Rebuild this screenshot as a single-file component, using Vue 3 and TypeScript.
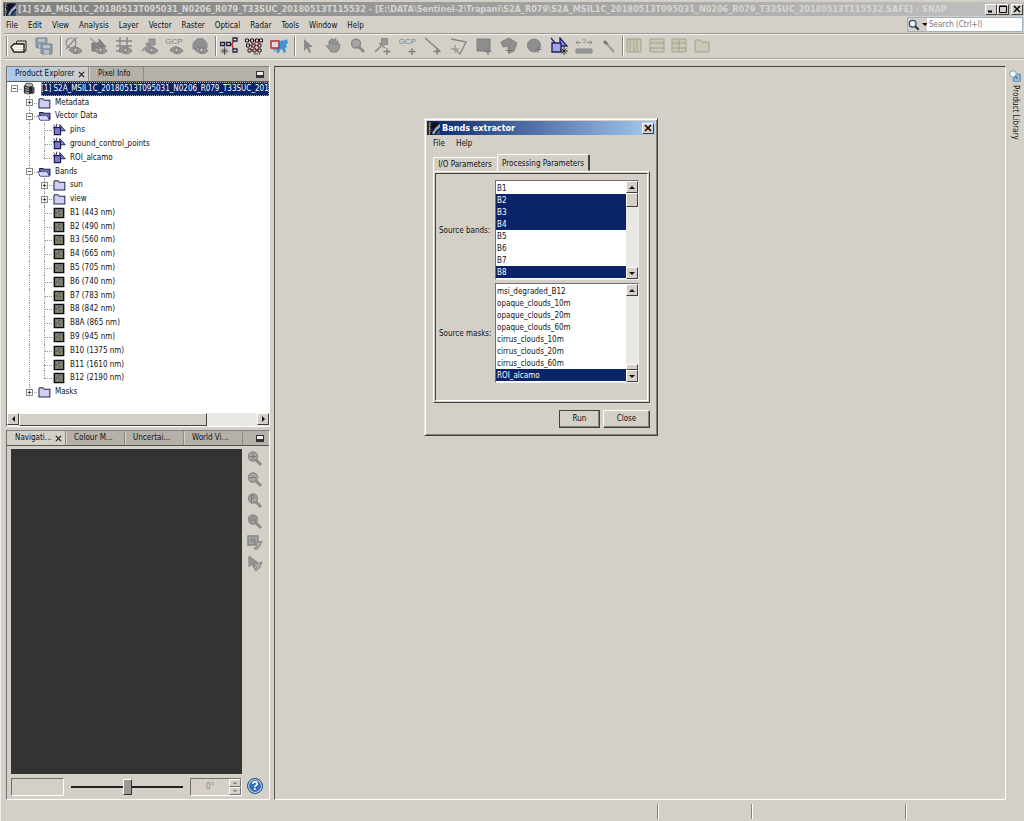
<script setup lang="ts">
import { ref } from 'vue'

interface TreeRow { level: number; label: string; icon: string; toggle?: string; last?: boolean }
interface Tool { name: string; icon: string; live?: boolean }

const path = 'S2A_MSIL1C_20180513T095031_N0206_R079_T33SUC_20180513T115532'
const title = `[1] ${path} - [E:\\DATA\\Sentinel-2\\Trapani\\S2A_R079\\${path}.SAFE] - SNAP`
const menus = ['File', 'Edit', 'View', 'Analysis', 'Layer', 'Vector', 'Raster', 'Optical', 'Radar', 'Tools', 'Window', 'Help']

const eye = '<path d="M4 13q5-6 11-1q2 1 2 2q-6 6-13-1z" fill="#999" stroke="#7f7f7f"/><circle cx="10.500" cy="13" r="2" fill="#c4c1ba" stroke="#777"/>'
const plus = '<path d="M13 11v7M9.500 14.500h7" stroke="#7d7d7d" stroke-width="1.300"/>'
const lens = '<path d="M10 10l5 5" stroke="#8b8b8b" stroke-width="3"/><circle cx="7" cy="6.500" r="4.500" fill="#a5a5a5" stroke="#888" stroke-width="1.300"/>'

const icons: Record<string, string> = {
  open: '<path d="M7 4h9v10h-3V7H6z" fill="#e9d9d2" stroke="#222"/><path d="M1 10l3-3h10v8H4z" fill="#fffef4" stroke="#222" stroke-width="1.400"/><path d="M4 10h9M4 12.500h9" stroke="#d8d2c4"/>',
  saveAll: '<path d="M1 1h11v10H2l-1-1z" fill="#8b9aa7" stroke="#7d8b98"/><path d="M3 2h7v3H3zM4 7h5v4H4z" fill="#b9c2c6"/><path d="M6 7h11v10H7l-1-1z" fill="#8b9aa7" stroke="#7b8995"/><path d="M8 8h7v3H8zM9 13h5v4H9z" fill="#b9c2c6"/>',
  noData: '<circle cx="6" cy="6" r="5" fill="none" stroke="#888" stroke-width="1.200"/><path d="M1 12L12 0" stroke="#888" stroke-width="1.200"/>' + eye,
  shapeEye: '<path d="M0 1l5 4M2 6h7V2l7 8H9v4H2z" fill="#858585" stroke="#777"/>' + eye,
  gridEye: '<path d="M1 4h16M1 9h16M5 0v16M12 0v12M1 14h5" stroke="#858585" stroke-width="1.400" fill="none"/>' + eye,
  pinEye: '<path d="M1 14l6-6" stroke="#888" stroke-width="1.600"/><path d="M8 2h6v6H8z" fill="#999" stroke="#888"/><path d="M5 6l6 5" stroke="#888" stroke-width="2"/>' + eye,
  gcpEye: eye,
  maskEye: '<path d="M2 12V7q3-7 10-5q5 3 4 9z" fill="#909090" stroke="#858585"/>' + eye,
  graph: '<g fill="#dfe0ee" stroke="#22223c" stroke-width="1.300"><path d="M10 7.500h2L14 3M12 7.500l2 6" fill="none" stroke="#c52222"/><path d="M0.500 5.500h4v3h-4zM6.500 5.500h4v3h-4zM13 1h4v3h-4zM13 12h4v3h-4z"/></g><path d="M4.500 10v8M.500 14h8M2 11.500l5 5M7 11.500l-5 5" stroke="#444" stroke-width=".9"/>',
  batch: '<path d="M2 3.500h14M2 8.500h14M3 13h10M5 3.500l3 5l4-5l3 5l-3 5l-4-5l-4 5" fill="none" stroke="#bd2828"/><g fill="#ddd" stroke="#22111c"><path d="M0.500 2h3v3h-3zM5.500 2h3v3h-3zM10.500 2h3v3h-3zM14.500 2h3v3h-3zM1.500 7h3v3h-3zM7 7h3v3H7zM13 7h3v3h-3zM3 12h3v3H3zM8 12h3v3H8zM13 12h3v3h-3z"/><path d="M9 17h6" stroke-dasharray="1.500 1"/></g>',
  map: '<path d="M9 5l3-2l1 1l4-2l1 4l-2 1l1 3l-2 1l1 4l-2 1l-2-4l-2 1l-1 3l-2 0l-1-5z" fill="#3f93d6"/><path d="M2 11h5l-1 3l-2 1z" fill="#6fa9d4"/><path d="M1 4h8v7H1z" fill="#d9d8da" stroke="#b13131" stroke-width="1.400"/>',
  arrow: '<path d="M5 2v12l3-3l2 5l2-1l-2-5h4z" fill="#8b8b8b"/>',
  hand: '<path d="M2 8l3 2V4h1v4l1-6h2v6l1-6h2v6l1-4h1v5l1-2h1q0 5-3 8H7z" fill="#9a9a9a" stroke="#858585"/>',
  zoom: lens,
  pinAdd: '<path d="M1 15l7-7M5 6l6 5" stroke="#8a8a8a" stroke-width="1.600"/><path d="M7.500 1.500h6v6h-6z" fill="#999" stroke="#888"/>' + plus,
  gcpAdd: plus,
  lineAdd: '<path d="M1 1l15 13" stroke="#888" stroke-width="1.600"/>' + plus,
  polylineAdd: '<path d="M1 2l15 3l-6 12l-4-4" fill="none" stroke="#888" stroke-width="1.400"/><path d="M5 8v8M1 12h8" stroke="#888"/>',
  rectAdd: '<path d="M2 2h13v12H2z" fill="#8d8d8d" stroke="#7e7e7e"/>' + plus,
  polyAdd: '<path d="M1 5l8-4l8 5l-3 8l-5 2l-1-5l1-2l-6 1z" fill="#8f8f8f" stroke="#808080"/><path d="M9 10v7M5.500 13.500h7" stroke="#777"/>',
  circleAdd: '<circle cx="9" cy="8.500" r="6.500" fill="#8f8f8f" stroke="#808080"/><path d="M13 9v7M9.500 12.500h7" stroke="#777"/>',
  newVector: '<path d="M1 1l4 5M10 1l7 8h-7z" stroke="#1b2270" stroke-width="1.300" fill="#9a9adf"/><path d="M2 6h9v9H2z" fill="#a3a3e4" stroke="#1b2270" stroke-width="1.400"/><path d="M14 10v8M10 14h8M11.500 11.500l5 5M16.500 11.500l-5 5" stroke="#222" stroke-width=".9"/>',
  measure: '<path d="M1 5.500h5M12 5.500h5M3 3.500l-2 2l2 2M15 3.500l2 2l-2 2" stroke="#888" fill="none"/><path d="M1 12h16v4H1z" fill="#999" stroke="#888"/>',
  wand: '<path d="M6 6l8 9" stroke="#999" stroke-width="2"/><path d="M4 4l3 3" stroke="#777" stroke-width="3"/>',
  tileV: '<path d="M2 2h14v13H2zM5 2v13M9 2v13M12 2v13" fill="#c9c8b4" stroke="#a2a192"/>',
  tileH: '<path d="M2 2h14v13H2zM2 6h14M2 11h14" fill="#c9c8b4" stroke="#a2a192"/>',
  tileGrid: '<path d="M2 2h14v13H2zM9 2v13M2 6h14M2 11h14" fill="#c9c8b4" stroke="#a2a192"/>',
  tab: '<path d="M2 3h6l1 2h7v10H2z" fill="#c9c8b4" stroke="#a2a192"/>',
  product: '<path d="M3 5v9q5 3 10 0V5q-5-3-10 0z" fill="#333" stroke="#111"/><path d="M4 6v8q3 2 5 1V7z" fill="#999"/><path d="M3 8q5 3 10 0M3 11q5 3 10 0" stroke="#111" fill="none"/><ellipse cx="9" cy="4" rx="5" ry="2.500" fill="#bbb" stroke="#222"/><path d="M13 5l3 2v7l-3 2z" fill="#444"/>',
  folder: '<path d="M2.500 15.500v-11l1-1h4l2 2h7v10z" fill="#ccd" stroke="#222759" stroke-width="1.300"/><path d="M4 7h11v7H4z" fill="#cfcff7"/>',
  folderOpen: '<path d="M3.500 13V4.500h4l1 1h8V13z" fill="#77a" stroke="#1b1d4f" stroke-width="1.500"/><path d="M1 8.500h12l3 6H4z" fill="#d7d7fb" stroke="#32346e"/>',
  vector: '<path d="M2 2l3 4M6 1v4M1 6l3 1M10 2l7 8h-7z" stroke="#191b58" fill="#8e8ed3" stroke-width="1.200"/><path d="M3 6h8v9H3z" fill="#7b7bc3" stroke="#191b58" stroke-width="1.500"/>',
  band: '<path d="M3 3h12v12H3z" fill="#74786c" stroke="#0c0c0c" stroke-width="1.800"/><path d="M5 5h3v2H5zM9 7h4v2H9zM6 10h3v3H6zM11 11h3v2h-3z" fill="#88895f"/><path d="M8 5h3v2H8zM5 8h3v2H5zM9 10h2v2H9z" fill="#5c6578"/>',
  zoomIn: lens + '<path d="M4 6.500h6M7 3.500v6" stroke="#777"/>',
  zoomOut: lens + '<path d="M4 6.500h6" stroke="#777"/>',
  zoomPixel: lens + '<path d="M5.500 9.500v-6h2q2 1.500 0 3h-2" stroke="#777" fill="none"/>',
  zoomAll: lens + '<path d="M5 9.500v-4q2-4 4 0v4M5 7h4" stroke="#777" fill="none"/>',
  syncView: '<path d="M2 2h10v9H2z" fill="#a5a5a5" stroke="#858585" stroke-width="1.400"/><path d="M5 5h4v3H5z" fill="#999" stroke="#858585"/><path d="M9 9l7-2l-2 5q-4 6-6 2l3-1z" fill="#aaa" stroke="#858585"/>',
  syncCursor: '<path d="M3 1v11l3-3l2 4l1-5h3z" fill="#959595" stroke="#858585"/><path d="M8 10l8-3l-2 5q-4 6-6 2l3-1z" fill="#aaa" stroke="#858585"/>',
  logo: '<path d="M0 0h18v18H0z" fill="#17213f"/><path d="M6 16Q10 8 18 2v5Q11 12 9 18z" fill="#a3abb8"/><path d="M7 0h9L6 12z" fill="#0b0f26"/><path d="M0 0h5v18H0z" fill="#161616"/><path d="M1 1h3M1 4h3M2 6v3M1 10h3M1 13h3M2 15v3" stroke="#eee" stroke-width="1.400"/><path d="M12 18q1-5 6-7v7z" fill="#2c5f75"/>',
  library: '<path d="M7 6h10v11H6z" fill="#79add0" stroke="#4c85ad"/><path d="M9 9h6M9 12h6M9 15h6" stroke="#d5e9f3"/><circle cx="6" cy="6" r="5" fill="#eef6fa" stroke="#7c9aaa" stroke-width="1.500"/><path d="M9 9l4 4" stroke="#53788f" stroke-width="2"/>',
  search: '<circle cx="7" cy="7" r="5" fill="#f4f6f7" stroke="#29527b" stroke-width="2"/><path d="M11 11l5 5" stroke="#222" stroke-width="3"/>',
}

const toolGroups: { id: string; tools: Tool[] }[] = [
  { id: 'files', tools: [{ name: 'Open Product', icon: 'open', live: true }, { name: 'Save All', icon: 'saveAll' }] },
  { id: 'overlays', tools: [
    { name: 'No-Data Overlay', icon: 'noData' }, { name: 'Shape Overlay', icon: 'shapeEye' }, { name: 'Graticule Overlay', icon: 'gridEye' },
    { name: 'Pin Overlay', icon: 'pinEye' }, { name: 'GCP Overlay', icon: 'gcpEye' }, { name: 'Mask Overlay', icon: 'maskEye' }] },
  { id: 'graphs', tools: [{ name: 'Graph Builder', icon: 'graph', live: true }, { name: 'Batch Processing', icon: 'batch', live: true }, { name: 'World Map', icon: 'map', live: true }] },
  { id: 'interact', tools: [
    { name: 'Select', icon: 'arrow' }, { name: 'Pan', icon: 'hand' }, { name: 'Zoom', icon: 'zoom' }, { name: 'Pin Placing', icon: 'pinAdd' },
    { name: 'GCP Placing', icon: 'gcpAdd' }, { name: 'Draw Line', icon: 'lineAdd' }, { name: 'Draw Polyline', icon: 'polylineAdd' },
    { name: 'Draw Rectangle', icon: 'rectAdd' }, { name: 'Draw Polygon', icon: 'polyAdd' }, { name: 'Draw Ellipse', icon: 'circleAdd' },
    { name: 'New Vector Data', icon: 'newVector', live: true }, { name: 'Range Finder', icon: 'measure' }, { name: 'Magic Wand', icon: 'wand' }] },
  { id: 'tiles', tools: [{ name: 'Tile Vertically', icon: 'tileV' }, { name: 'Tile Horizontally', icon: 'tileH' }, { name: 'Tile Evenly', icon: 'tileGrid' }, { name: 'Tile Single', icon: 'tab' }] },
]

const bands = ['B1 (443 nm)', 'B2 (490 nm)', 'B3 (560 nm)', 'B4 (665 nm)', 'B5 (705 nm)', 'B6 (740 nm)', 'B7 (783 nm)', 'B8 (842 nm)', 'B8A (865 nm)', 'B9 (945 nm)', 'B10 (1375 nm)', 'B11 (1610 nm)', 'B12 (2190 nm)']
const rows: TreeRow[] = [
  { level: 0, label: `[1] ${path}`, icon: 'product', toggle: '−' },
  { level: 1, label: 'Metadata', icon: 'folder', toggle: '+' },
  { level: 1, label: 'Vector Data', icon: 'folderOpen', toggle: '−' },
  { level: 2, label: 'pins', icon: 'vector' },
  { level: 2, label: 'ground_control_points', icon: 'vector' },
  { level: 2, label: 'ROI_alcamo', icon: 'vector', last: true },
  { level: 1, label: 'Bands', icon: 'folderOpen', toggle: '−' },
  { level: 2, label: 'sun', icon: 'folder', toggle: '+' },
  { level: 2, label: 'view', icon: 'folder', toggle: '+' },
  ...bands.map((label, i) => ({ level: 2, label, icon: 'band', last: i === bands.length - 1 })),
  { level: 1, label: 'Masks', icon: 'folder', toggle: '+', last: true },
]

const navTabs = ['Navigati...', 'Colour M...', 'Uncertai...', 'World Vi...']
const navTools: Tool[] = [
  { name: 'Zoom in', icon: 'zoomIn' }, { name: 'Zoom out', icon: 'zoomOut' }, { name: 'Zoom to pixel', icon: 'zoomPixel' },
  { name: 'Zoom all', icon: 'zoomAll' }, { name: 'Synchronise views', icon: 'syncView' }, { name: 'Synchronise cursors', icon: 'syncCursor' },
]

const sourceBands = ['B1', 'B2', 'B3', 'B4', 'B5', 'B6', 'B7', 'B8']
const sourceMasks = ['msi_degraded_B12', 'opaque_clouds_10m', 'opaque_clouds_20m', 'opaque_clouds_60m', 'cirrus_clouds_10m', 'cirrus_clouds_20m', 'cirrus_clouds_60m', 'ROI_alcamo']
const pickedBands = ref(['B2', 'B3', 'B4', 'B8'])
const pickedMasks = ref(['ROI_alcamo'])
const zoomLevel = ref(50)
</script>

<template>
  <div class="app">
    <header class="titlebar">
      <svg class="logo" viewBox="0 0 18 18" v-html="icons.logo" />
      <h1>{{ title }}</h1>
      <button class="win" aria-label="Minimise"><svg viewBox="0 0 8 8"><path d="M1 6.500h4" stroke="#000" stroke-width="2" /></svg></button>
      <button class="win" aria-label="Restore"><svg viewBox="0 0 8 8"><path d="M.5 1h7v6.500h-7zM.5 1.500h7" fill="none" stroke="#000" /></svg></button>
      <button class="win win-close" aria-label="Close window"><svg viewBox="0 0 8 8"><path d="M1 1l6 6M7 1L1 7" stroke="#000" stroke-width="1.500" /></svg></button>
    </header>

    <div class="menubar">
      <nav class="menus"><button v-for="m in menus" :key="m">{{ m }}</button></nav>
      <div class="search">
        <button aria-label="Search scope"><svg class="i12" viewBox="0 0 18 18" v-html="icons.search" /><span class="caret down" /></button>
        <input type="search" aria-label="Search" placeholder="Search (Ctrl+I)">
      </div>
    </div>

    <div class="toolbar" role="toolbar" aria-label="Main tools">
      <div v-for="g in toolGroups" :key="g.id" class="group" :class="g.id">
        <button v-for="t in g.tools" :key="t.name" :aria-label="t.name" :disabled="!t.live">
          <svg class="i18" viewBox="0 0 18 18" v-html="icons[t.icon]" />
          <span v-if="t.icon.startsWith('gcp')" class="gcp">GCP</span>
          <span v-if="t.icon === 'measure'" class="query">?</span>
        </button>
      </div>
    </div>

    <div class="workspace">
      <aside class="side">
        <section class="panel explorer">
          <div class="tabs" role="tablist">
            <button class="tab active" role="tab">Product Explorer <svg class="x" viewBox="0 0 8 8"><path d="M1 1l6 6M7 1L1 7" stroke="#222" stroke-width="1.400" /></svg></button>
            <button class="tab" role="tab">Pixel Info</button>
            <button class="mini" aria-label="Minimise group" />
          </div>
          <ul class="tree" role="tree">
            <li v-for="(r, i) in rows" :key="i" role="treeitem" :class="['l' + r.level, { last: r.last, root: i === 0 }]">
              <span v-if="r.level > 0" class="cell" />
              <span v-if="r.level > 1" class="cell trunk" />
              <span class="cell branch" :class="{ lead: r.level > 0 }"><button v-if="r.toggle" class="toggle" :aria-label="'Toggle ' + r.label"><svg viewBox="0 0 7 7"><path :d="r.toggle === '+' ? 'M1 3.500h5M3.500 1v5' : 'M1 3.500h5'" stroke="#111" /></svg></button></span>
              <svg class="node" viewBox="0 0 18 18" v-html="icons[r.icon]" />
              <span class="label">{{ r.label }}</span>
            </li>
          </ul>
          <div class="hscroll">
            <button aria-label="Scroll left"><span class="caret left" /></button>
            <div class="thumb" />
            <button aria-label="Scroll right"><span class="caret right" /></button>
          </div>
        </section>

        <section class="panel navigation">
          <div class="tabs" role="tablist">
            <button v-for="(t, i) in navTabs" :key="t" class="tab even" :class="{ current: i === 0 }" role="tab">{{ t }} <svg v-if="i === 0" class="x" viewBox="0 0 8 8"><path d="M1 1l6 6M7 1L1 7" stroke="#222" stroke-width="1.400" /></svg></button>
            <button class="mini" aria-label="Minimise group" />
          </div>
          <div class="navgrid">
            <div class="navleft">
              <div class="canvas" />
              <div class="controls">
                <input class="scale" type="text" aria-label="Scale" disabled>
                <input v-model="zoomLevel" class="slider" type="range" min="0" max="100" aria-label="Zoom level">
                <div class="spinner">
                  <input type="text" value="0°" aria-label="Rotation" disabled>
                  <div class="steps">
                    <button aria-label="Increase" disabled><span class="caret up tiny" /></button>
                    <button aria-label="Decrease" disabled><span class="caret down tiny" /></button>
                  </div>
                </div>
              </div>
            </div>
            <div class="navtools">
              <button v-for="t in navTools" :key="t.name" :aria-label="t.name" disabled><svg class="i18" viewBox="0 0 18 18" v-html="icons[t.icon]" /></button>
              <button class="help" aria-label="Help">?</button>
            </div>
          </div>
        </section>
      </aside>

      <main class="desktop" />

      <aside class="library">
        <button><svg class="i12" viewBox="0 0 18 18" v-html="icons.library" /><span>Product Library</span></button>
      </aside>
    </div>

    <footer class="status"><span class="s1" /><span class="s2" /><span class="s3" /></footer>

    <div class="dialog" role="dialog" aria-labelledby="dialog-title">
      <div class="dialog-title">
        <svg class="logo" viewBox="0 0 18 18" v-html="icons.logo" />
        <h2 id="dialog-title">Bands extractor</h2>
        <button class="win" aria-label="Close dialog"><svg viewBox="0 0 8 8"><path d="M1 1l6 6M7 1L1 7" stroke="#000" stroke-width="1.500" /></svg></button>
      </div>
      <nav class="dialog-menu"><button>File</button><button>Help</button></nav>
      <div class="dialog-tabs" role="tablist">
        <button role="tab">I/O Parameters</button>
        <button class="on" role="tab">Processing Parameters</button>
      </div>
      <div class="page">
        <div class="pageinner">
          <label for="bands">Source bands:</label>
          <div class="listbox">
            <select id="bands" v-model="pickedBands" multiple size="8"><option v-for="b in sourceBands" :key="b">{{ b }}</option></select>
            <div class="vscroll">
              <button aria-label="Scroll bands up"><span class="caret up" /></button>
              <div class="thumb" />
              <button aria-label="Scroll bands down"><span class="caret down" /></button>
            </div>
          </div>
          <label for="masks">Source masks:</label>
          <div class="listbox">
            <select id="masks" v-model="pickedMasks" multiple size="8"><option v-for="m in sourceMasks" :key="m">{{ m }}</option></select>
            <div class="vscroll end">
              <button aria-label="Scroll masks up"><span class="caret up" /></button>
              <div class="thumb" />
              <button aria-label="Scroll masks down"><span class="caret down" /></button>
            </div>
          </div>
        </div>
      </div>
      <div class="actions"><button class="run">Run</button><button>Close</button></div>
    </div>
  </div>
</template>

<style>
body { background: #d4d0c8; }
</style>

<style scoped>
* { box-sizing: border-box; }
.app { position: relative; display: flex; flex-direction: column; min-height: 100vh; overflow: hidden; padding: 2px 0 0 2px; border-left: 1px solid #f0eeea; background: #d4d0c8; color: #111; font: 8px/12px "DejaVu Sans Condensed", "DejaVu Sans", sans-serif; }
button, input, select { margin: 0; padding: 0; border: 0; border-radius: 0; background: none; color: inherit; font: inherit; outline: 0; }
button { display: flex; align-items: center; justify-content: center; white-space: nowrap; }
h1, h2, ul { margin: 0; padding: 0; font: inherit; list-style: none; }
svg { display: block; flex: none; }
.i18 { width: 18px; height: 18px; }
.i12 { width: 12px; height: 12px; }
.caret { width: 0; height: 0; border: 3px solid transparent; }
.caret.down { border-top-color: #111; border-bottom: 0; }
.caret.up { border-bottom-color: #111; border-top: 0; }
.caret.left { border-right-color: #111; border-left: 0; }
.caret.right { border-left-color: #111; border-right: 0; }
.caret.tiny { border-width: 2px; opacity: .5; }
.caret.tiny.up { border-top: 0; }
.caret.tiny.down { border-bottom: 0; }

.titlebar { display: flex; align-items: center; height: 14px; padding-right: 1px; background: linear-gradient(90deg, #808080, #c0c0c0); }
.titlebar h1 { flex: 1; min-width: 0; overflow: hidden; padding-left: 2px; color: #d8d5ce; font-size: 9px; font-weight: bold; white-space: nowrap; }
.logo { width: 12px; height: 13px; margin-left: 1px; }
.win { width: 12px; height: 11px; background: #d4d0c8; border: 1px solid; border-color: #fff #404040 #404040 #fff; }
.win svg { width: 8px; height: 8px; }
.win-close { margin-left: 2px; }

.menubar { display: flex; align-items: center; justify-content: space-between; height: 17px; }
.menus { display: flex; gap: 10px; padding: 2px 0 0 3px; }
.search { display: flex; width: 116px; height: 15px; margin-right: 1px; border: 1px solid #9fb0bf; }
.search button { gap: 2px; width: 19px; }
.search input { flex: 1; min-width: 0; padding-left: 2px; background: #fff; }
.search input::placeholder { color: #777; }

.toolbar { display: flex; height: 26px; padding: 1px 0; margin-left: 1px; border-top: 1px solid #999; border-bottom: 1px solid #aaa7a0; box-shadow: inset 0 1px #f3f1ee, 0 1px #f3f1ee; }
.group { display: flex; align-items: center; border-left: 1px solid #858585; box-shadow: inset 1px 0 #fff; margin: 1px 0; }
.group button { position: relative; flex: 1; height: 22px; }
.files { width: 54px; margin-left: 2px; padding-right: 4px; }
.overlays { width: 155px; padding-right: 2px; }
.graphs { width: 79px; padding-right: 2px; }
.interact { width: 328px; }
.tiles { width: 91px; }
.gcp { position: absolute; top: 2px; left: 3px; color: #808080; font: 8px/10px "Liberation Sans", sans-serif; }
.query { position: absolute; top: 2px; left: 10px; color: #808080; font: 8px/10px "Liberation Sans", sans-serif; }

.workspace { display: flex; flex: 1; padding: 7px 0 0 3px; }
.side { display: flex; flex-direction: column; width: 264px; gap: 3px; }
.panel { display: flex; flex-direction: column; border: 1px solid; border-color: #808080 #fff #fff #707070; }
.tabs { display: flex; height: 15px; background: #b5b1aa; border-bottom: 1px solid #555; }
.tab { justify-content: flex-start; gap: 3px; width: 55px; padding: 0 0 0 9px; border-right: 1px solid #8e8b86; box-shadow: inset 1px 0 #d4d0c8; }
.tab.active { width: 82px; padding-left: 8px; background: linear-gradient(90deg, #a9c8e9, #d0cec9); }
.tab.even { width: 59px; padding-left: 8px; }
.tab.current { background: #d4d0c8; }
.x { width: 7px; height: 7px; }
.mini { width: 8px; height: 7px; margin: 4px 5px 0 auto; background: #eee; border: 1px solid #333; border-bottom-width: 3px; }
.tree { display: flex; flex-direction: column; height: 331px; padding-bottom: 14px; overflow: hidden; background: #fff; }
.tree li { display: flex; flex: 1; align-items: center; min-height: 0; white-space: nowrap; }
.cell { position: relative; align-self: stretch; display: flex; flex: none; align-items: center; justify-content: center; width: 15px; }
.trunk::before, .lead::before { content: ""; position: absolute; top: 0; bottom: 0; left: 7px; border-left: 1px dotted #999; }
.last .lead::before { bottom: 50%; }
.branch::after { content: ""; position: absolute; top: 50%; left: 7px; right: 0; border-top: 1px dotted #999; }
.toggle { position: relative; z-index: 1; width: 7px; height: 7px; background: #fff; border: 1px solid #888; }
.toggle svg { width: 5px; height: 5px; }
.node { width: 14px; height: 14px; }
.label { margin-left: 4px; }
.root .label { flex: 1; align-self: stretch; overflow: hidden; margin-left: 5px; background: #0a246a; color: #fff; outline: 1px dotted #aaa; outline-offset: -1px; line-height: 14px; }
.hscroll { display: flex; height: 13px; background: #eae8e4; }
.hscroll button, .vscroll button { flex: none; width: 12px; height: 12px; background: #d4d0c8; border: 1px solid; border-color: #fff #404040 #404040 #fff; }
.thumb { background: #d4d0c8; border: 1px solid; border-color: #fff #404040 #404040 #fff; }
.hscroll .thumb { flex: none; width: 188px; }
.hscroll button:last-child { margin-left: auto; }

.navigation { flex: 1; }
.navgrid { display: flex; flex: 1; padding: 3px 5px 0 4px; }
.navleft { display: flex; flex: 1; flex-direction: column; min-width: 0; }
.canvas { flex: 1; background: #333; }
.controls { display: flex; align-items: center; height: 25px; gap: 7px; }
.scale { width: 53px; height: 18px; border: 1px solid; border-color: #707070 #fff #fff #707070; }
.slider { flex: 1; min-width: 0; height: 16px; appearance: none; background: linear-gradient(#222, #222) center / 100% 2px no-repeat; }
.slider::-webkit-slider-thumb { appearance: none; width: 9px; height: 16px; background: #999; border: 1px solid; border-color: #fff #333 #333 #fff; }
.spinner { display: flex; width: 52px; height: 18px; border: 1px solid; border-color: #707070 #fff #fff #707070; }
.spinner input { flex: 1; min-width: 0; color: #888; text-align: center; }
.steps { display: flex; flex-direction: column; width: 12px; }
.steps button { flex: 1; border: 1px solid; border-color: #fff #707070 #707070 #fff; }
.navtools { display: flex; flex-direction: column; align-items: center; width: 18px; margin: -1px 0 0 4px; }
.navtools button { height: 21px; }
.navtools .help { width: 16px; height: 16px; margin: auto 0 5px; border: 1px solid #20508a; border-radius: 50%; background: #3a6cb0; box-shadow: inset 0 0 0 1px #dbe6f3; color: #fff; font: bold 12px/14px "Liberation Sans", sans-serif; }

.desktop { flex: 1; margin-left: 4px; border: 1px solid; border-color: #404040 #fff #fff #555; }
.library { width: 18px; padding-top: 4px; }
.library button { flex-direction: column; gap: 3px; width: 18px; }
.library span { writing-mode: vertical-rl; }

.status { display: flex; justify-content: flex-end; height: 21px; padding: 4px 0 2px; }
.status span { border-left: 1px solid #858585; box-shadow: inset 1px 0 #fff; }
.s1 { width: 94px; }
.s2 { width: 154px; }
.s3 { width: 119px; }

.dialog { position: absolute; left: 423px; top: 118px; width: 234px; padding: 2px; background: #d4d0c8; border: 1px solid; border-color: #e8e6e1 #404040 #404040 #e8e6e1; box-shadow: inset 1px 1px #fff, inset -1px -1px #808080; }
.dialog-title { display: flex; align-items: center; height: 14px; padding-right: 1px; background: linear-gradient(90deg, #0a246a, #a6caf0); }
.dialog-title h2 { flex: 1; padding-left: 2px; color: #fff; font-size: 9px; font-weight: bold; }
.dialog-menu { display: flex; gap: 11px; height: 16px; padding: 2px 0 0 6px; }
.dialog-tabs { display: flex; align-items: flex-end; height: 20px; padding: 0 6px; }
.dialog-tabs button { width: 64px; height: 14px; padding-top: 2px; border: 1px solid; border-color: #fff transparent transparent #fff; border-radius: 2px 2px 0 0; }
.dialog-tabs .on { width: 93px; height: 17px; border-right: 2px solid #404040; }
.page { margin: 0 5px 0 6px; padding: 1px; border: 1px solid; border-color: #fff #404040 #404040 #fff; }
.pageinner { display: grid; grid-template-columns: 56px 144px; row-gap: 3px; align-items: center; padding: 6px 0 17px 3px; border: 1px solid; border-color: #404040 #fff #fff #404040; }
.pageinner label { padding-top: 2px; white-space: nowrap; }
.listbox { display: flex; height: 100px; background: #fff; border: 1px solid; border-color: #707070 #f0eeea #f0eeea #707070; }
.listbox select { flex: 1; min-width: 0; height: 98px; padding-top: 1px; overflow: hidden; }
.listbox option { min-height: 12px; padding: 2px 1px 0; }
.listbox option:checked { background: linear-gradient(#0a246a, #0a246a); -webkit-text-fill-color: #fff; }
.vscroll { display: flex; flex-direction: column; width: 12px; background: #eae8e4; }
.vscroll .thumb { height: 14px; margin-bottom: auto; }
.vscroll.end .thumb { height: 6px; margin: auto 0 0; }
.actions { display: flex; justify-content: flex-end; gap: 3px; padding: 7px 5px 5px; }
.actions button { width: 47px; height: 18px; border: 1px solid; border-color: #fff #404040 #404040 #fff; box-shadow: inset -1px -1px #808080; }
.actions .run { width: 41px; outline: 1px solid #404040; outline-offset: -1px; }
</style>
